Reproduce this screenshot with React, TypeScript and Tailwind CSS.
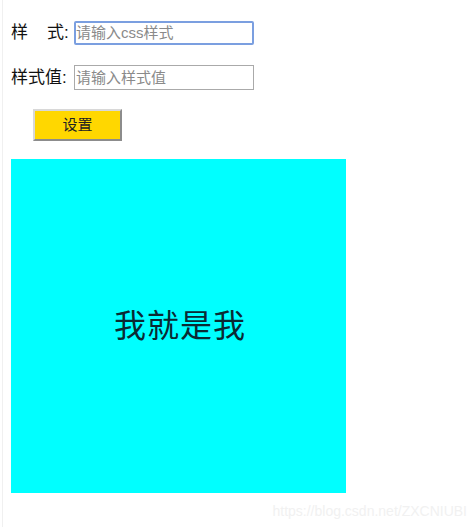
export default function App() {
  return (
    <div className="relative h-[527px] w-[474px] overflow-hidden bg-white pl-[11px] pt-[21px] font-['Liberation_Sans','Noto_Sans_CJK_SC',sans-serif]">
      <div className="absolute bottom-0 left-[2px] top-0 w-px bg-[#f0f0f0]" />

      <div className="flex h-6 items-center">
        <label className="w-[63px] whitespace-pre text-[17px] leading-6 text-[#111]">样&nbsp;&nbsp;&nbsp;&nbsp;式:</label>
        <input
          placeholder="请输入css样式"
          className="h-6 w-[180px] rounded-[2px] border-2 border-[#7b9fe0] px-0 pb-[2px] text-[15px] outline-none placeholder:text-[#8a8a8a]"
        />
      </div>

      <div className="mt-5 flex h-[25px] items-center">
        <label className="w-[63px] text-[17px] leading-6 text-[#111]">样式值:</label>
        <input
          placeholder="请输入样式值"
          className="h-[25px] w-[180px] border border-[#aaa] px-[1px] text-[15px] outline-none placeholder:text-[#8a8a8a]"
        />
      </div>

      <button className="ml-[22px] mt-[19px] block h-8 w-[89px] border-2 border-b-[#8c8c8c] border-l-[#d8d8d8] border-r-[#8c8c8c] border-t-[#d8d8d8] bg-[#ffd700] text-[15px] text-[#222]">
        设置
      </button>

      <div className="mt-[18px] flex h-[334px] w-[335px] items-center justify-center bg-[#00ffff] pl-[3px] text-[32px] tracking-[1px] text-[#0b2a33]">
        我就是我
      </div>

      <div className="absolute bottom-[7px] right-[7px] text-[14px] leading-[18px] text-[#f1f1f1]">
        https://blog.csdn.net/ZXCNIUBI
      </div>
    </div>
  );
}
